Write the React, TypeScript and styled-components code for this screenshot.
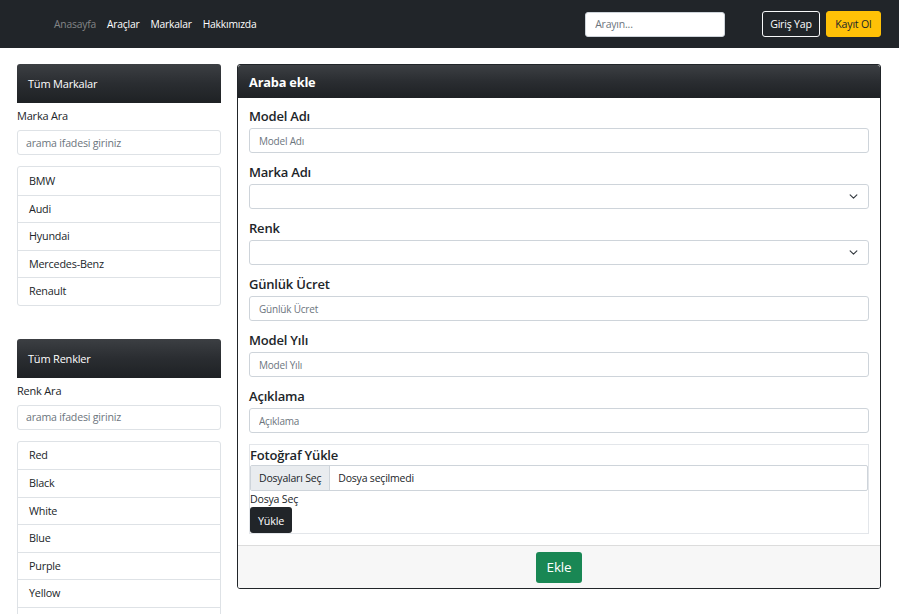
import React from "react";
import styled, { createGlobalStyle } from "styled-components";

const Global = createGlobalStyle`
  * { box-sizing: border-box; }
  html, body { margin: 0; padding: 0; background: #fff; }
  body {
    font-family: "Open Sans", "Noto Sans", sans-serif;
    font-size: 11px;
    color: #212529;
    letter-spacing: -0.2px;
  }
  input, button, select { font-family: inherit; letter-spacing: inherit; }
`;

const Navbar = styled.nav`
  height: 48px;
  background: #212529;
  display: flex;
  align-items: center;
  padding: 0 18px 0 54px;
`;

const NavLinks = styled.div`
  display: flex;
  gap: 11px;
  flex: 1;
`;

const NavLink = styled.a<{ $muted?: boolean }>`
  color: ${(p) => (p.$muted ? "rgba(255,255,255,0.45)" : "#fff")};
  font-size: 10.3px;
  text-decoration: none;
`;

const NavSearch = styled.input`
  width: 140px;
  height: 25px;
  border: 1px solid #ced4da;
  border-radius: 3px;
  padding: 0 9px;
  font-size: 10.5px;
  margin-right: 37px;
  &::placeholder { color: #6c757d; }
`;

const NavButtons = styled.div`
  display: flex;
  gap: 6px;
`;

const NavButton = styled.button<{ $variant: "outline" | "warning" }>`
  height: 26px;
  padding: 0 ${(p) => (p.$variant === "outline" ? 7 : 8.5)}px;
  font-size: 10.6px;
  border-radius: 3px;
  border: 1px solid ${(p) => (p.$variant === "outline" ? "#f8f9fa" : "#ffc107")};
  background: ${(p) => (p.$variant === "outline" ? "transparent" : "#ffc107")};
  color: ${(p) => (p.$variant === "outline" ? "#fff" : "#212529")};
`;

const Main = styled.main`
  display: flex;
  align-items: flex-start;
  gap: 16px;
  padding: 16px 18px 0 17px;
`;

const Sidebar = styled.aside`
  width: 204px;
  flex-shrink: 0;
  display: flex;
  flex-direction: column;
  gap: 33px;
`;

const SideSection = styled.section`
  display: flex;
  flex-direction: column;
`;

const DarkHeader = styled.div<{ $height: number; $size: number; $bold?: boolean }>`
  height: ${(p) => p.$height}px;
  display: flex;
  align-items: center;
  padding: 0 11px;
  color: #fff;
  font-size: ${(p) => p.$size}px;
  font-weight: ${(p) => (p.$bold ? 700 : 400)};
  background: linear-gradient(180deg, #3c3f43 0%, #2a2d31 50%, #1e2124 100%);
  border-radius: 3px 3px 0 0;
`;

const SideLabel = styled.div`
  font-size: 11px;
  line-height: 26px;
`;

const SideInput = styled.input`
  height: 25px;
  width: 100%;
  border: 1px solid #dee2e6;
  border-radius: 3px;
  padding: 0 8px;
  font-size: 10.6px;
  margin: 1px 0 11px;
  &::placeholder { color: #6c757d; }
`;

const ListGroup = styled.ul`
  list-style: none;
  margin: 0;
  padding: 0;
  border: 1px solid #dee2e6;
  border-radius: 3px;
`;

const ListItem = styled.li`
  height: 27.5px;
  display: flex;
  align-items: center;
  padding: 0 11px 1px;
  font-size: 10.8px;
  color: #212529;
  & + & { border-top: 1px solid #dee2e6; }
`;

const Card = styled.div`
  flex: 1;
  border: 1px solid #212529;
  border-radius: 3px;
  overflow: hidden;
`;

const CardBody = styled.div`
  padding: 8px 11px 11px;
`;

const FormGroup = styled.div`
  margin-bottom: 9px;
`;

const FormLabel = styled.label`
  display: block;
  font-size: 13px;
  font-weight: 600;
  line-height: 20px;
  margin-bottom: 2px;
  color: #212529;
`;

const FormInput = styled.input`
  display: block;
  width: 100%;
  height: 25px;
  border: 1px solid #ced4da;
  border-radius: 3px;
  padding: 0 9px;
  font-size: 10px;
  &::placeholder { color: #6c757d; }
`;

const SelectBox = styled.div`
  height: 25px;
  border: 1px solid #ced4da;
  border-radius: 3px;
  display: flex;
  align-items: center;
  justify-content: flex-end;
  padding: 0 10px;
  color: #343a40;
`;

const UploadBox = styled.div`
  margin-top: 11px;
  border: 1px solid #e3e6ea;
  display: flex;
  flex-direction: column;
  align-items: flex-start;
`;

const UploadTitle = styled.div`
  font-size: 13px;
  font-weight: 600;
  line-height: 19px;
  padding-top: 1px;
  color: #212529;
`;

const FileInput = styled.div`
  width: 100%;
  height: 26px;
  border: 1px solid #ced4da;
  border-radius: 2px;
  display: flex;
  align-items: stretch;
  font-size: 10.5px;
`;

const FileButton = styled.span`
  background: #e9ecef;
  border-right: 1px solid #ced4da;
  padding: 0 8px;
  display: flex;
  align-items: center;
  color: #212529;
`;

const FileText = styled.span`
  display: flex;
  align-items: center;
  padding: 0 8px;
`;

const SmallLabel = styled.div`
  font-size: 10.6px;
  line-height: 16px;
`;

const DarkButton = styled.button`
  height: 26px;
  padding: 0 8px;
  background: #212529;
  color: #fff;
  border: none;
  border-radius: 3px;
  font-size: 10.8px;
`;

const CardFooter = styled.div`
  height: 43px;
  background: #f7f7f7;
  border-top: 1px solid #dcdcdc;
  display: flex;
  align-items: center;
  justify-content: center;
`;

const SuccessButton = styled.button`
  height: 31px;
  padding: 0 11px;
  background: #198754;
  color: #fff;
  border: none;
  border-radius: 3px;
  font-size: 13.5px;
`;

const Chevron = () => (
  <svg width="9" height="9" viewBox="0 0 16 16" fill="none">
    <path d="M2 5l6 6 6-6" stroke="#343a40" strokeWidth="2" strokeLinecap="round" strokeLinejoin="round" />
  </svg>
);

const brands = ["BMW", "Audi", "Hyundai", "Mercedes-Benz", "Renault"];
const colors = ["Red", "Black", "White", "Blue", "Purple", "Yellow", "Green"];

const fields: { label: string; placeholder?: string; select?: boolean }[] = [
  { label: "Model Adı", placeholder: "Model Adı" },
  { label: "Marka Adı", select: true },
  { label: "Renk", select: true },
  { label: "Günlük Ücret", placeholder: "Günlük Ücret" },
  { label: "Model Yılı", placeholder: "Model Yılı" },
  { label: "Açıklama", placeholder: "Açıklama" },
];

export default function App() {
  return (
    <>
      <Global />
      <Navbar>
        <NavLinks>
          <NavLink $muted>Anasayfa</NavLink>
          <NavLink>Araçlar</NavLink>
          <NavLink>Markalar</NavLink>
          <NavLink>Hakkımızda</NavLink>
        </NavLinks>
        <NavSearch placeholder="Arayın..." />
        <NavButtons>
          <NavButton $variant="outline">Giriş Yap</NavButton>
          <NavButton $variant="warning">Kayıt Ol</NavButton>
        </NavButtons>
      </Navbar>
      <Main>
        <Sidebar>
          <SideSection>
            <DarkHeader $height={39} $size={11}>Tüm Markalar</DarkHeader>
            <SideLabel>Marka Ara</SideLabel>
            <SideInput placeholder="arama ifadesi giriniz" />
            <ListGroup>
              {brands.map((b) => (
                <ListItem key={b}>{b}</ListItem>
              ))}
            </ListGroup>
          </SideSection>
          <SideSection>
            <DarkHeader $height={39} $size={11}>Tüm Renkler</DarkHeader>
            <SideLabel>Renk Ara</SideLabel>
            <SideInput placeholder="arama ifadesi giriniz" />
            <ListGroup>
              {colors.map((c) => (
                <ListItem key={c}>{c}</ListItem>
              ))}
            </ListGroup>
          </SideSection>
        </Sidebar>
        <Card>
          <DarkHeader $height={33} $size={12.8} $bold>Araba ekle</DarkHeader>
          <CardBody>
            {fields.map((f) => (
              <FormGroup key={f.label}>
                <FormLabel>{f.label}</FormLabel>
                {f.select ? (
                  <SelectBox>
                    <Chevron />
                  </SelectBox>
                ) : (
                  <FormInput placeholder={f.placeholder} />
                )}
              </FormGroup>
            ))}
            <UploadBox>
              <UploadTitle>Fotoğraf Yükle</UploadTitle>
              <FileInput>
                <FileButton>Dosyaları Seç</FileButton>
                <FileText>Dosya seçilmedi</FileText>
              </FileInput>
              <SmallLabel>Dosya Seç</SmallLabel>
              <DarkButton>Yükle</DarkButton>
            </UploadBox>
          </CardBody>
          <CardFooter>
            <SuccessButton>Ekle</SuccessButton>
          </CardFooter>
        </Card>
      </Main>
    </>
  );
}
